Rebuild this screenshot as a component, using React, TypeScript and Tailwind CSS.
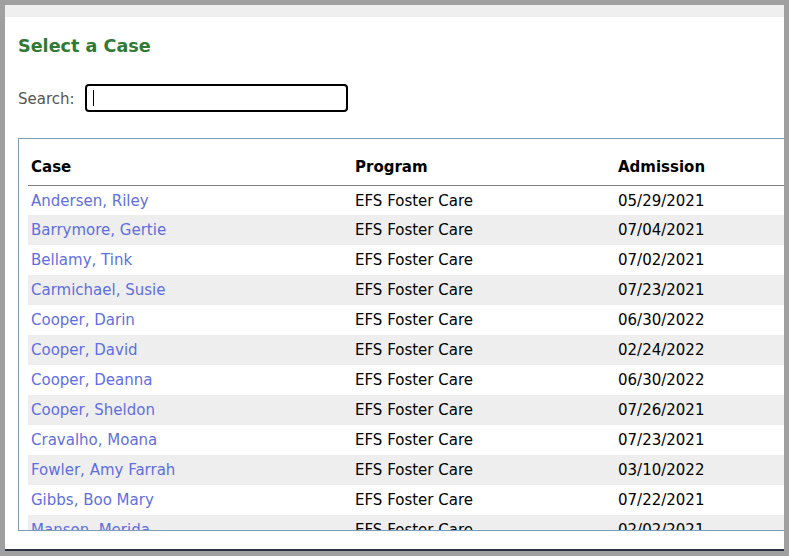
import React from 'react';

const cases = [
  ['Andersen, Riley', 'EFS Foster Care', '05/29/2021'],
  ['Barrymore, Gertie', 'EFS Foster Care', '07/04/2021'],
  ['Bellamy, Tink', 'EFS Foster Care', '07/02/2021'],
  ['Carmichael, Susie', 'EFS Foster Care', '07/23/2021'],
  ['Cooper, Darin', 'EFS Foster Care', '06/30/2022'],
  ['Cooper, David', 'EFS Foster Care', '02/24/2022'],
  ['Cooper, Deanna', 'EFS Foster Care', '06/30/2022'],
  ['Cooper, Sheldon', 'EFS Foster Care', '07/26/2021'],
  ['Cravalho, Moana', 'EFS Foster Care', '07/23/2021'],
  ['Fowler, Amy Farrah', 'EFS Foster Care', '03/10/2022'],
  ['Gibbs, Boo Mary', 'EFS Foster Care', '07/22/2021'],
  ['Manson, Merida', 'EFS Foster Care', '02/02/2021'],
  ['Nguyen, Tam', 'EFS Foster Care', '04/11/2022'],
];

export default function App() {
  return (
    <div className="w-[789px] h-[556px] bg-[#a0a0a0] pt-[5px] pl-[5px] overflow-hidden" style={{ fontFamily: '"DejaVu Sans", Verdana, sans-serif' }}>
      <div className="w-[779px] h-[546px] bg-white overflow-hidden border-b-2 border-[#2b3142] flex flex-col">
        <div className="h-[12px] shrink-0 bg-[#efefef]" />
        <div className="pl-[13px]">
          {/* page heading */}
          <h1 className="mt-[18px] text-[17.6px] leading-[22px] font-bold text-[#2f7a34]">Select a Case</h1>
          <div className="mt-[27px] flex items-center gap-[10px]">
            <label className="text-[15px] text-[#555555] pt-[2px]">Search:</label>
            <div className="w-[263px] h-[28px] border-2 border-black rounded-[4px] flex items-center pl-[6px]">
              <span className="w-px h-[16px] bg-black" />
            </div>
          </div>
          <div className="mt-[26px] w-[820px] h-[393px] border border-[#7f9db9] overflow-hidden pl-[9px] pt-[9px]">
            <table className="w-[800px] border-collapse text-[15px]">
              <thead>
                <tr className="border-b border-[#808080] h-[37px]">
                  <th className="w-[324px] text-left font-bold text-black pl-[3px] pt-[2px]">Case</th>
                  <th className="w-[263px] text-left font-bold text-black pl-[3px] pt-[2px]">Program</th>
                  <th className="text-left font-bold text-black pl-[3px] pt-[2px]">Admission</th>
                </tr>
              </thead>
              <tbody>
                {cases.map((c, i) => (
                  <tr key={c[0]} className={`h-[30px] ${i % 2 === 1 ? 'bg-[#eeeeee]' : 'bg-white'}`}>
                    <td className="pl-[3px] pt-[1px] text-[#5f6fe0]">{c[0]}</td>
                    <td className="pl-[3px] pt-[1px] text-black">{c[1]}</td>
                    <td className="pl-[3px] pt-[1px] text-black">{c[2]}</td>
                  </tr>
                ))}
              </tbody>
            </table>
          </div>
        </div>
      </div>
    </div>
  );
}
